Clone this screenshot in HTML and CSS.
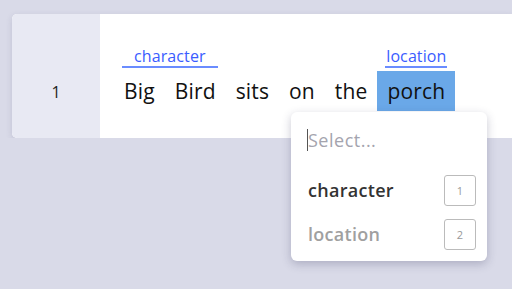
FILE: index.html
```html
<!DOCTYPE html>
<html lang="en">
  <head>
    <meta charset="UTF-8" />
    <meta name="viewport" content="width=device-width, initial-scale=1.0" />
    <title>Annotator</title>
    <link rel="stylesheet" href="styles.css">
  </head>
  <body>
    <div class="card">
      <div class="line-num">1</div>
      <div class="sentence">
        <div class="group">
          <span class="tag">character</span>
          <div class="words">
            <span class="word">Big</span>
            <span class="word">Bird</span>
          </div>
        </div>
        <div class="group">
          <span class="tag empty"></span>
          <div class="words">
            <span class="word">sits</span>
            <span class="word">on</span>
            <span class="word">the</span>
          </div>
        </div>
        <div class="group">
          <span class="tag">location</span>
          <div class="words">
            <span class="word selected">porch</span>
          </div>
        </div>
      </div>
    </div>

    <div class="dropdown">
      <div class="search">
        <span class="caret"></span>
        <span class="placeholder">Select...</span>
      </div>
      <div class="option active">
        <span>character</span>
        <span class="key">1</span>
      </div>
      <div class="option">
        <span>location</span>
        <span class="key">2</span>
      </div>
    </div>
  </body>
</html>
```

FILE: styles.css
```css
body {
  margin: 0;
  padding: 14px 0 0 12px;
  background-color: #d9dae8;
  font-family: "Open Sans", Lato, sans-serif;
  overflow: hidden;
}

.card {
  display: flex;
  width: 500px;
  height: 124px;
  background: white;
  border-radius: 5px 0 0 5px;
  box-shadow: 0px 2px 6px rgba(60, 60, 100, 0.15);
  overflow: hidden;
}

.line-num {
  width: 88px;
  background-color: #e8e9f3;
  display: flex;
  align-items: center;
  justify-content: center;
  padding-top: 31px;
  box-sizing: border-box;
  font-size: 16px;
  color: #222;
}

.sentence {
  display: flex;
  align-items: flex-end;
  padding: 0 0 27px 14px;
}

.group {
  display: flex;
  flex-direction: column;
}

.tag {
  margin: 0 8px 3px 8px;
  height: 22px;
  border-bottom: 2px solid #6a8cff;
  color: #3a5cff;
  font-size: 16px;
  letter-spacing: 0.1px;
  text-align: center;
  line-height: 24px;
}

.tag.empty {
  border-bottom-color: transparent;
}

.words {
  display: flex;
}

.word {
  padding: 0 10px;
  height: 40px;
  line-height: 40px;
  font-size: 21px;
  letter-spacing: 0.15px;
  color: #111;
}

.word.selected {
  background-color: #6aa8e8;
}

.dropdown {
  position: absolute;
  left: 291px;
  top: 112px;
  width: 196px;
  height: 149px;
  background: white;
  border-radius: 6px;
  box-shadow: 0px 3px 10px rgba(40, 40, 80, 0.25);
  box-sizing: border-box;
  padding: 0 11px 5px 17px;
}

.search {
  height: 56px;
  display: flex;
  align-items: center;
  font-size: 18px;
  letter-spacing: 0.5px;
}

.caret {
  width: 1px;
  height: 22px;
  margin-left: -1px;
  background-color: #555;
}

.placeholder {
  color: #a4a4ae;
}

.option {
  height: 44px;
  display: flex;
  align-items: center;
  justify-content: space-between;
  font-size: 18px;
  letter-spacing: 0.3px;
  font-weight: 600;
  color: #a0a0a0;
}

.option.active {
  color: #333;
}

.key {
  width: 30px;
  height: 29px;
  border: 1px solid #bbb;
  border-radius: 3px;
  display: flex;
  align-items: center;
  justify-content: center;
  font-size: 11px;
  letter-spacing: 0;
  font-weight: normal;
  color: #999;
}
```
